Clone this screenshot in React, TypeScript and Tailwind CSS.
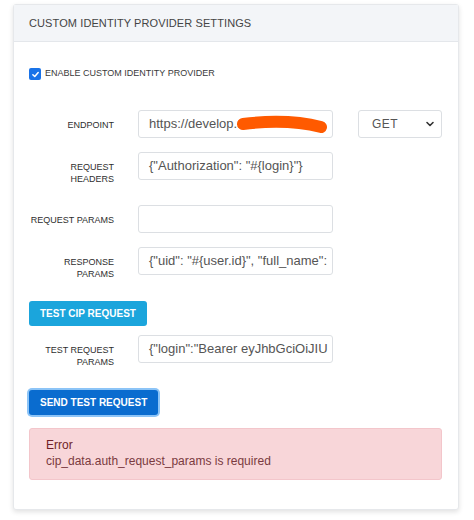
import React from 'react';

const font = { fontFamily: '"Liberation Sans", Arial, sans-serif' };

function Row({ label, twoLine, children }: { label: React.ReactNode; twoLine?: boolean; children: React.ReactNode }) {
  return (
    <div className="flex items-start mb-[14px]">
      <div
        className={`w-[85px] shrink-0 text-right text-[9px] leading-[12px] text-[#2e2e2e] uppercase pt-[9px] ${twoLine ? 'pb-[6px]' : 'pb-[7px]'}`}
      >
        {label}
      </div>
      <div className="ml-[24px] flex items-start">{children}</div>
    </div>
  );
}

function Input({ value }: { value: string }) {
  return (
    <div className="w-[195px] h-[28px] border border-[#dcdfe3] rounded-[3px] bg-white px-[10px] text-[13px] leading-[26px] text-[#555] whitespace-nowrap overflow-hidden">
      {value}
    </div>
  );
}

export default function App() {
  return (
    <div className="w-[474px] h-[520px] bg-white pt-[4px] pl-[13px]" style={font}>
      <div className="w-[446px] h-[506px] border border-[#e6e8eb] rounded-[3px] shadow-[0_2px_5px_rgba(0,0,0,0.12)] bg-white">
        <div className="h-[37px] bg-[#f3f5f8] border-b border-[#e4e7eb] flex items-center pl-[15px] text-[11px] text-[#444] tracking-[0.1px]">
          CUSTOM IDENTITY PROVIDER SETTINGS
        </div>

        <div className="pl-[15px] pr-[16px]">
          <label className="flex items-center mt-[26px] h-[12px]">
            <span className="w-[12px] h-[12px] rounded-[2px] bg-[#1a73e8] flex items-center justify-center">
              <svg width="9" height="9" viewBox="0 0 12 12">
                <path d="M2.5 6.3 L5 8.7 L9.6 3.4" fill="none" stroke="white" strokeWidth="2" strokeLinecap="round" strokeLinejoin="round" />
              </svg>
            </span>
            <span className="ml-[4px] text-[9px] text-[#3a3a3a]">ENABLE CUSTOM IDENTITY PROVIDER</span>
          </label>

          <div className="mt-[30px]">
            <Row label="Endpoint">
              <div className="relative">
                <Input value="https://develop.a" />
                <svg className="absolute left-[99px] top-[5px]" width="96" height="22" viewBox="0 0 96 22">
                  <path d="M6 9 C 30 6, 60 6, 84 12" fill="none" stroke="#ff5a00" strokeWidth="12" strokeLinecap="round" />
                </svg>
              </div>
              <div className="ml-[25px] w-[84px] h-[28px] border border-[#dcdfe3] rounded-[3px] bg-white flex items-center justify-between pl-[13px] pr-[6px] text-[12px] text-[#555] tracking-[0.5px]">
                <span>GET</span>
                <svg width="10" height="10" viewBox="0 0 10 10">
                  <path d="M2 3.5 L5 6.5 L8 3.5" fill="none" stroke="#333" strokeWidth="1.6" strokeLinecap="round" strokeLinejoin="round" />
                </svg>
              </div>
            </Row>
            <Row label={<>Request<br />Headers</>} twoLine>
              <Input value={'{"Authorization": "#{login}"}'} />
            </Row>
            <Row label="Request Params">
              <Input value="" />
            </Row>
            <Row label={<>Response<br />Params</>} twoLine>
              <Input value={'{"uid": "#{user.id}", "full_name":'} />
            </Row>
          </div>

          <button className="h-[25px] px-[11px] rounded-[3px] bg-[#1ba5dc] text-white text-[10px] font-bold">
            TEST CIP REQUEST
          </button>

          <div className="mt-[9px]">
            <Row label={<>Test Request<br />Params</>} twoLine>
              <Input value={'{"login":"Bearer eyJhbGciOiJIU'} />
            </Row>
          </div>

          <button className="mt-[2px] h-[25px] px-[11px] rounded-[3px] bg-[#0a6ccf] text-white text-[10px] font-bold ring-2 ring-[#8cc4f7]">
            SEND TEST REQUEST
          </button>

          <div className="mt-[13px] h-[52px] rounded-[3px] bg-[#f8d6d9] border border-[#f3c6cb] pl-[16px] pt-[8px] text-[12px] leading-[16px] text-[#6f1f27]">
            <div>Error</div>
            <div className="text-[#7a3a40]">cip_data.auth_request_params is required</div>
          </div>
        </div>
      </div>
    </div>
  );
}
